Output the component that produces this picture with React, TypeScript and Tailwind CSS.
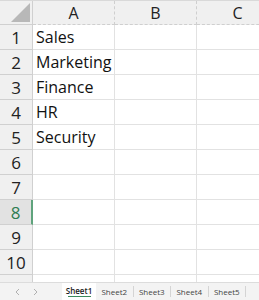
import React from 'react';

const rows = ['Sales', 'Marketing', 'Finance', 'HR', 'Security', '', '', '', '', '', ''];
const sheets = ['Sheet1', 'Sheet2', 'Sheet3', 'Sheet4', 'Sheet5'];

const Chevron = ({ dir }: { dir: 'left' | 'right' }) => (
  <svg width="5" height="8" viewBox="0 0 5 8" fill="none" stroke="#b0b0b0" strokeWidth="1">
    {dir === 'left' ? <path d="M4 1 L1 4 L4 7" /> : <path d="M1 1 L4 4 L1 7" />}
  </svg>
);

export default function App() {
  return (
    <div
      className="w-[259px] h-[300px] overflow-hidden flex flex-col bg-white border-t border-[#d9d9d9]"
      style={{ fontFamily: '"Open Sans", "Liberation Sans", sans-serif' }}
    >
      {/* Grid */}
      <div className="flex-1 overflow-hidden">
        <div className="grid grid-cols-[33px_82px_82px_82px] auto-rows-[25px] grid-rows-[24px]">
          {/* Header row */}
          <div className="relative bg-[#f0f0f0] border-b border-r border-[#d0d0d0]">
            <div className="absolute right-[2px] bottom-[2px] w-0 h-0 border-l-[19px] border-l-transparent border-b-[19px] border-b-[#b8b8b8]" />
          </div>
          {['A', 'B', 'C'].map((c) => (
            <div
              key={c}
              className="bg-[#f0f0f0] border-b border-r border-dashed border-[#cfcfcf] flex items-center justify-center text-[16px] leading-none text-[#222]"
            >
              {c}
            </div>
          ))}

          {rows.map((text, i) => {
            const selected = i === 7;
            const label = i < 10 ? i + 1 : '';
            return (
              <React.Fragment key={i}>
                <div
                  className={
                    selected
                      ? 'bg-[#e2e2e2] border-b border-[#d0d0d0] border-r-2 border-r-[#5fa37c] flex items-center justify-center text-[17px] leading-none text-[#2f7d52]'
                      : 'bg-[#f0f0f0] border-b border-r border-[#d0d0d0] flex items-center justify-center text-[17px] leading-none text-[#222]'
                  }
                >
                  {label}
                </div>
                <div className="border-b border-r border-[#e2e2e2] flex items-center pl-[3px] text-[16px] leading-none text-[#111] whitespace-nowrap">
                  {text}
                </div>
                <div className="border-b border-r border-[#e2e2e2]" />
                <div className="border-b border-r border-[#e2e2e2]" />
              </React.Fragment>
            );
          })}
        </div>
      </div>

      {/* Sheet tabs */}
      <div className="h-[18px] shrink-0 bg-[#f3f3f3] border-t border-[#dcdcdc] flex items-stretch text-[8px] leading-none text-[#444]">
        <div className="w-[62px] flex items-center gap-[13px] pl-[15px]">
          <Chevron dir="left" />
          <Chevron dir="right" />
        </div>
        {sheets.map((s, i) =>
          i === 0 ? (
            <div key={s} className="w-[34px] bg-white flex flex-col items-center justify-center font-semibold text-[#222]">
              <span className="leading-[9px]">{s}</span>
              <span className="w-[23px] h-[1.5px] bg-[#3b8a5c] mt-[1px]" />
            </div>
          ) : (
            <div key={s} className="w-[37.5px] flex items-center justify-center border-r border-[#d4d4d4] my-[3px]">
              {s}
            </div>
          )
        )}
      </div>
    </div>
  );
}
